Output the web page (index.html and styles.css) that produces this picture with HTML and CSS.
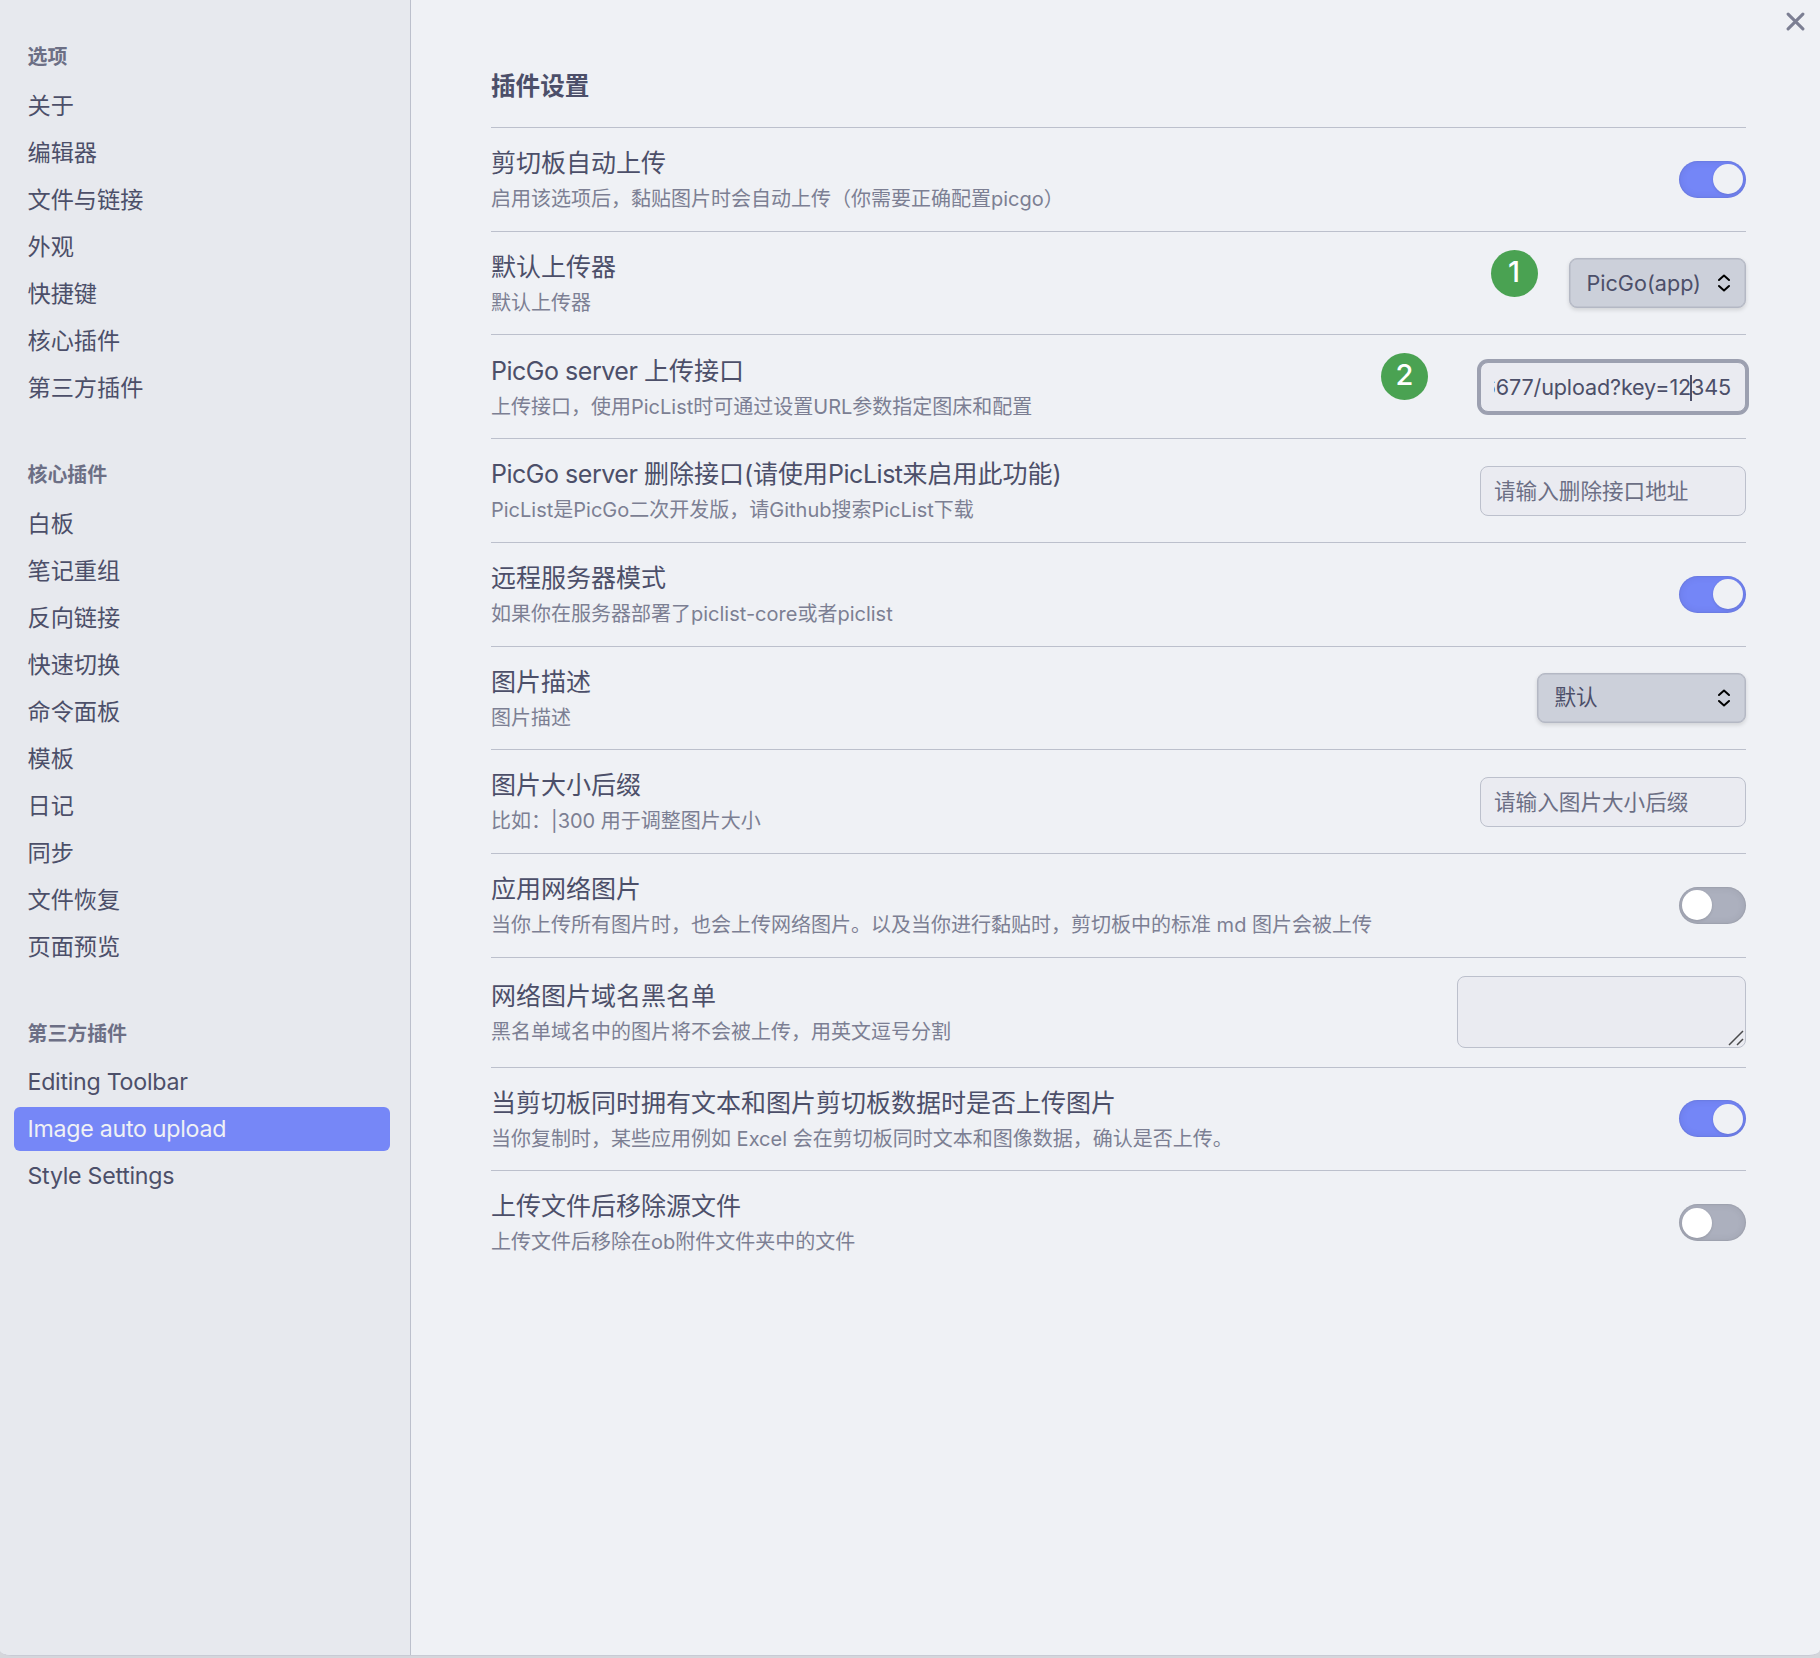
FILE: index.html
```html
<!DOCTYPE html>
<html lang="zh-CN">
<head>
<meta charset="utf-8">
<title>插件设置</title>
<link rel="stylesheet" href="styles.css">
</head>
<body>
<div class="modal">
  <nav class="sidebar">
    <section class="group">
      <h3 class="group-title">选项</h3>
      <a class="item">关于</a>
      <a class="item">编辑器</a>
      <a class="item">文件与链接</a>
      <a class="item">外观</a>
      <a class="item">快捷键</a>
      <a class="item">核心插件</a>
      <a class="item">第三方插件</a>
    </section>
    <section class="group">
      <h3 class="group-title">核心插件</h3>
      <a class="item">白板</a>
      <a class="item">笔记重组</a>
      <a class="item">反向链接</a>
      <a class="item">快速切换</a>
      <a class="item">命令面板</a>
      <a class="item">模板</a>
      <a class="item">日记</a>
      <a class="item">同步</a>
      <a class="item">文件恢复</a>
      <a class="item">页面预览</a>
    </section>
    <section class="group">
      <h3 class="group-title">第三方插件</h3>
      <a class="item latin">Editing Toolbar</a>
      <a class="item latin active">Image auto upload</a>
      <a class="item latin">Style Settings</a>
    </section>
  </nav>

  <main class="content">
    <svg class="close" viewBox="0 0 18 18"><path d="M2 2 16 16M16 2 2 16"/></svg>
    <h2 class="heading">插件设置</h2>

    <div class="row">
      <div class="info"><div class="name">剪切板自动上传</div><div class="desc">启用该选项后，黏贴图片时会自动上传（你需要正确配置picgo）</div></div>
      <div class="toggle on"><span class="knob"></span></div>
    </div>
    <div class="row">
      <div class="info"><div class="name">默认上传器</div><div class="desc">默认上传器</div></div>
      <span class="badge badge-one">1</span>
      <div class="select"><span>PicGo(app)</span><svg class="chevrons" viewBox="0 0 12 18"><path d="M1 6 6 1.6 11 6M1 12 6 16.4 11 12"/></svg></div>
    </div>
    <div class="row">
      <div class="info"><div class="name"><span class="tight">PicGo server </span>上传接口</div><div class="desc">上传接口，使用PicList时可通过设置URL参数指定图床和配置</div></div>
      <span class="badge badge-two">2</span>
      <div class="input focused"><div class="scroll"><span class="value">6677/upload?key=12<i class="caret"></i>345</span></div></div>
    </div>
    <div class="row">
      <div class="info"><div class="name"><span class="tight">PicGo server </span>删除接口(请使用<span class="tight">PicList</span>来启用此功能)</div><div class="desc">PicList是PicGo二次开发版，请Github搜索PicList下载</div></div>
      <div class="input">请输入删除接口地址</div>
    </div>
    <div class="row">
      <div class="info"><div class="name">远程服务器模式</div><div class="desc">如果你在服务器部署了piclist-core或者piclist</div></div>
      <div class="toggle on"><span class="knob"></span></div>
    </div>
    <div class="row">
      <div class="info"><div class="name">图片描述</div><div class="desc">图片描述</div></div>
      <div class="select wide"><span>默认</span><svg class="chevrons" viewBox="0 0 12 18"><path d="M1 6 6 1.6 11 6M1 12 6 16.4 11 12"/></svg></div>
    </div>
    <div class="row">
      <div class="info"><div class="name">图片大小后缀</div><div class="desc">比如：|300 用于调整图片大小</div></div>
      <div class="input">请输入图片大小后缀</div>
    </div>
    <div class="row">
      <div class="info"><div class="name">应用网络图片</div><div class="desc">当你上传所有图片时，也会上传网络图片。以及当你进行黏贴时，剪切板中的标准 md 图片会被上传</div></div>
      <div class="toggle"><span class="knob"></span></div>
    </div>
    <div class="row tall">
      <div class="info"><div class="name">网络图片域名黑名单</div><div class="desc">黑名单域名中的图片将不会被上传，用英文逗号分割</div></div>
      <div class="textarea"><svg class="grip" viewBox="0 0 16 16"><path d="M1 15 15 1M9 15 15 9"/></svg></div>
    </div>
    <div class="row">
      <div class="info"><div class="name">当剪切板同时拥有文本和图片剪切板数据时是否上传图片</div><div class="desc">当你复制时，某些应用例如 Excel 会在剪切板同时文本和图像数据，确认是否上传。</div></div>
      <div class="toggle on"><span class="knob"></span></div>
    </div>
    <div class="row">
      <div class="info"><div class="name">上传文件后移除源文件</div><div class="desc">上传文件后移除在ob附件文件夹中的文件</div></div>
      <div class="toggle"><span class="knob"></span></div>
    </div>
  </main>
</div>
</body>
</html>
```
FILE: styles.css
```css
* { box-sizing: border-box; }

body {
  margin: 0;
  height: 1658px;
  overflow: hidden;
  background: #d5d6db;
  color: #4c4f69;
  font-family: Inter, "Noto Sans CJK SC", sans-serif;
}

.modal {
  display: flex;
  height: 1656px;
  overflow: hidden;
  background: #eff1f5;
  border-bottom: 1px solid #c9cbd5;
  border-radius: 0 0 11px 11px / 0 0 6px 6px;
}

.sidebar {
  flex: none;
  width: 411px;
  padding: 41px 20px 0 14px;
  background: #e7e9ee;
  border-right: 1px solid #bcc0cc;
}

.group {
  display: flex;
  flex-direction: column;
  gap: 3px;
  margin-bottom: 50px;
}

.group-title {
  margin: 0 0 8px;
  padding: 1px 0 0 13.5px;
  height: 31px;
  font-size: 19.9px;
  font-weight: 600;
  line-height: 31px;
  color: #6c6f85;
}

.item {
  height: 44px;
  padding-left: 13.5px;
  border-radius: 6px;
  font-size: 23.2px;
  line-height: 46px;
  white-space: nowrap;
}

.item.latin {
  letter-spacing: -0.27px;
  line-height: 45px;
}

.item.active {
  background: #7687f7;
  color: #eff1f5;
}

.content {
  position: relative;
  flex: 1;
  padding: 66px 74px 0 80px;
}

.close {
  position: absolute;
  top: 12px;
  right: 15px;
  width: 19px;
  height: 19px;
  fill: none;
  stroke: #7c7f93;
  stroke-width: 2.9;
  stroke-linecap: round;
}

.heading {
  margin: 0;
  height: 61.1px;
  font-size: 24.6px;
  font-weight: 600;
  line-height: 41px;
}

.row {
  position: relative;
  display: flex;
  align-items: center;
  justify-content: space-between;
  height: 103.7px;
  border-top: 1px solid #bcc0cc;
}

.row.tall { height: 110px; }

.info {
  padding-top: 3.6px;
  white-space: nowrap;
}

.name {
  font-size: 25px;
  line-height: 36px;
}

.tight { letter-spacing: -0.48px; }

.desc {
  font-size: 20px;
  line-height: 36px;
  color: #7c7f93;
}

.toggle {
  width: 67px;
  height: 37px;
  padding: 3.5px 3px;
  border-radius: 19px;
  background: #acb0be;
  box-shadow: inset 0 0 8px rgba(0, 0, 0, 0.08), inset 0 0 1px 1px rgba(0, 0, 0, 0.05);
}

.toggle.on {
  display: flex;
  justify-content: flex-end;
  background: #7486f7;
}

.knob {
  display: block;
  width: 30px;
  height: 30px;
  border-radius: 50%;
  background: #fff;
  box-shadow: 0 1px 3px rgba(0, 0, 0, 0.12);
}

.toggle.on .knob { background: #eff1f5; }

.select {
  display: flex;
  align-items: center;
  justify-content: space-between;
  width: 177px;
  height: 50px;
  padding: 0 15px 0 16.5px;
  border: 1px solid #b4b8c4;
  border-radius: 8px;
  background: #ccd0da;
  box-shadow: 0 2px 4px rgba(0, 0, 0, 0.13), inset 0 0 0 0.5px #b4b8c4;
  font-size: 21.6px;
}

.select.wide { width: 209px; }

.select.wide span { margin-bottom: 4px; }

.chevrons {
  width: 12px;
  height: 18px;
  fill: none;
  stroke: #000;
  stroke-width: 2;
  stroke-linecap: round;
  stroke-linejoin: round;
}

.input {
  width: 266px;
  height: 50px;
  padding: 0 14px 0 13px;
  border: 1px solid #bcc0cc;
  border-radius: 8px;
  background: #eaebf1;
  font-size: 21.6px;
  line-height: 48px;
  color: #6c6f85;
}

.input.focused {
  border-color: #9ca0b0;
  box-shadow: 0 0 0 3px #9ca0b0;
  color: #4c4f69;
}

.scroll {
  display: flex;
  justify-content: flex-end;
  overflow: hidden;
}

.value {
  position: relative;
  white-space: nowrap;
  letter-spacing: -0.15px;
}

.caret {
  display: inline-block;
  width: 2px;
  height: 26px;
  margin: 0 -1px;
  vertical-align: -6px;
  background: #4c4f69;
}

.textarea {
  display: flex;
  align-items: flex-end;
  justify-content: flex-end;
  width: 289px;
  height: 72px;
  padding: 0 1px 1px 0;
  border: 1px solid #bcc0cc;
  border-radius: 8px;
  background: #eaebf1;
}

.grip {
  width: 16px;
  height: 16px;
  fill: none;
  stroke: #4a4a4c;
  stroke-width: 1.5;
}

.badge {
  position: absolute;
  width: 47px;
  height: 47px;
  border-radius: 50%;
  background: #4aa252;
  color: #fff;
  font-size: 29px;
  font-weight: 500;
  line-height: 44px;
  text-align: center;
}

.badge-one { top: 18.5px; right: 208.5px; }
.badge-two { top: 17.5px; right: 318px; }
```
